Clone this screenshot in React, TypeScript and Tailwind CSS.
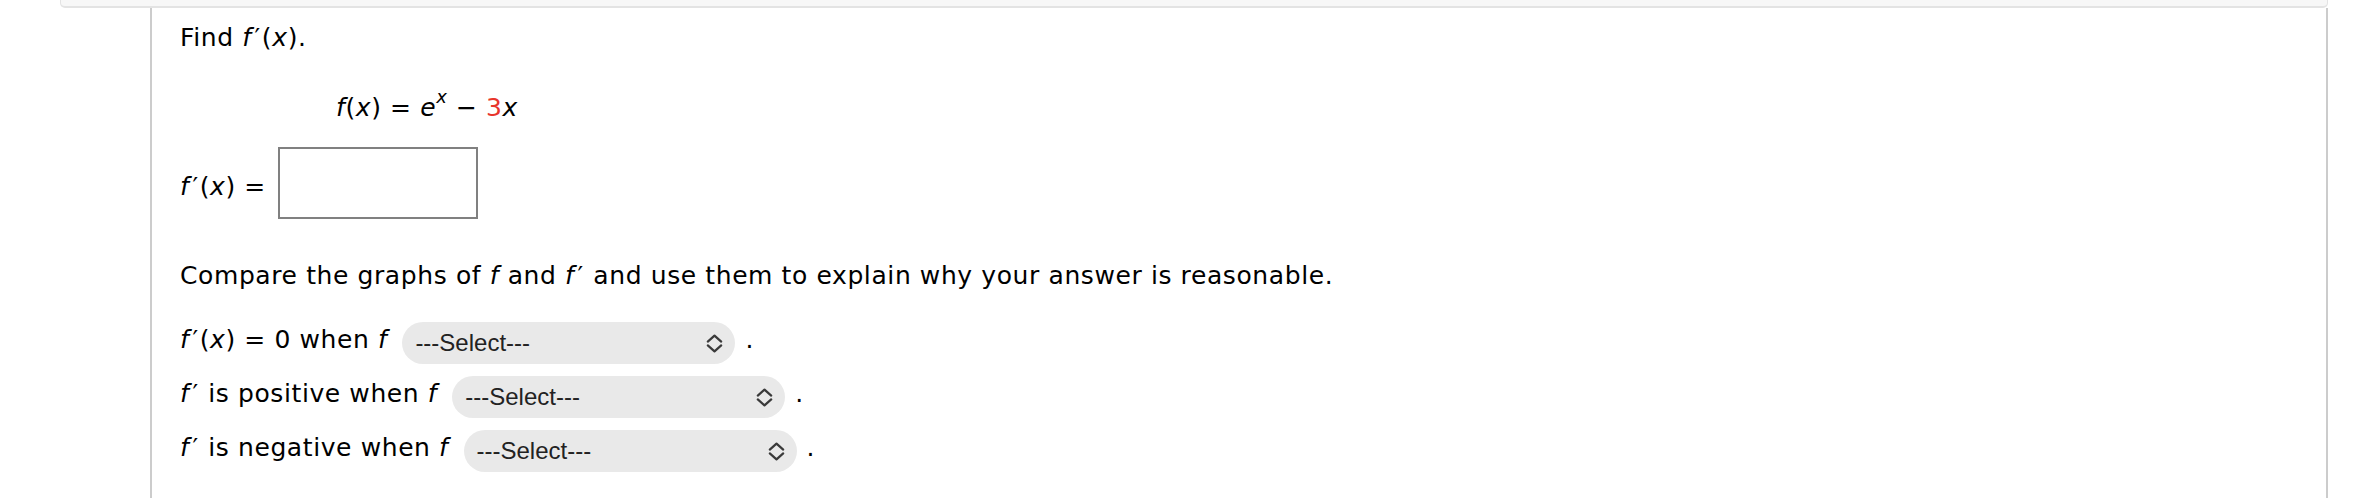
import React from "react";

const I = ({ children }: { children: React.ReactNode }) => (
  <span className="italic">{children}</span>
);

const Chevron = () => (
  <svg width="17" height="19" viewBox="0 0 17 19" fill="none" className="shrink-0">
    <path d="M1.8 7.6 L8.5 1.6 L15.2 7.6" stroke="#3a3a3a" strokeWidth="2.2" strokeLinecap="round" strokeLinejoin="round" />
    <path d="M1.8 11.4 L8.5 17.4 L15.2 11.4" stroke="#3a3a3a" strokeWidth="2.2" strokeLinecap="round" strokeLinejoin="round" />
  </svg>
);

const Select = () => (
  <div className="ml-[15px] flex h-[42px] w-[333px] shrink-0 items-center justify-between rounded-full bg-[#e9e9e9] pl-[13px] pr-[12px] font-['Liberation_Sans',Arial,sans-serif] text-[24px] tracking-normal text-[#222222]">
    <span>---Select---</span>
    <Chevron />
  </div>
);

const Prime = () => <span className="ml-[3px] mr-[1px] not-italic">′</span>;

export default function App() {
  return (
    <div className="flex h-[498px] w-[2360px] flex-col overflow-hidden bg-white font-['DejaVu_Sans',Verdana,sans-serif] text-[25px] leading-[36px] tracking-[0.6px] text-black">
      <div className="ml-[60px] h-[8px] w-[2268px] shrink-0 rounded-b-[5px] border-x border-b-2 border-[#e3e3e3] bg-[#f7f7f7]" />
      <div className="ml-[150px] w-[2178px] flex-1 border-x-2 border-[#cccccc] pl-[28px] pt-[12px]">
        <p>
          Find <I>f</I>
          <Prime />(<I>x</I>).
        </p>
        <p className="mt-[34px] pl-[156px]">
          <I>f</I>(<I>x</I>) = <I>e</I>
          <span className="relative top-[-13px] text-[18px] italic">x</span> − <span className="text-[#e8352b]">3</span>
          <I>x</I>
        </p>
        <div className="mt-[19px] flex items-start">
          <span className="mt-[22px]">
            <I>f</I>
            <Prime />(<I>x</I>) =
          </span>
          <div className="ml-[12px] h-[72px] w-[200px] border-2 border-[#808080]" />
        </div>
        <p className="mt-[39px]">
          Compare the graphs of <I>f</I> and <I>f</I>
          <Prime /> and use them to explain why your answer is reasonable.
        </p>
        <div className="mt-[28px] flex flex-col gap-[12px]">
          <div className="flex h-[42px] items-start">
            <span>
              <I>f</I>
              <Prime />(<I>x</I>) = 0 when <I>f</I>
            </span>
            <Select />
            <span className="ml-[10px]">.</span>
          </div>
          <div className="flex h-[42px] items-start">
            <span>
              <I>f</I>
              <Prime /> is positive when <I>f</I>
            </span>
            <Select />
            <span className="ml-[10px]">.</span>
          </div>
          <div className="flex h-[42px] items-start">
            <span>
              <I>f</I>
              <Prime /> is negative when <I>f</I>
            </span>
            <Select />
            <span className="ml-[10px]">.</span>
          </div>
        </div>
      </div>
    </div>
  );
}
